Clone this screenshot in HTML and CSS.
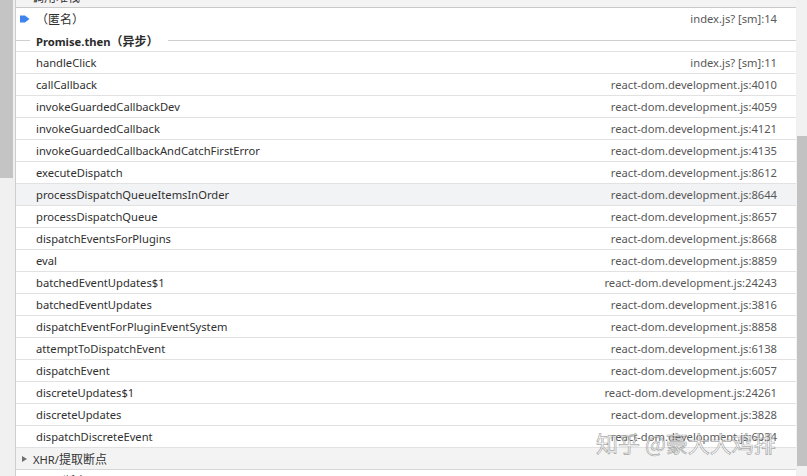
FILE: index.html
```html
<!DOCTYPE html>
<html lang="zh-CN">
<head>
<meta charset="utf-8">
<title>调用堆栈</title>
<link rel="stylesheet" href="styles.css">
</head>
<body>
<div class="app">
  <div class="lscroll"><div class="lthumb"></div></div>
  <div class="lgap"></div>
  <div class="main">
    <div class="list">
      <div class="section open"><span class="tri down"></span><span class="stitle cjk">调用堆栈</span></div>
      <div class="row current">
        <svg class="cur-icon" width="10" height="10" viewBox="0 0 10 10"><polygon points="0,1.5 5,1.5 9.5,5 5,8.5 0,8.5" fill="#3f84ee"/></svg>
        <span class="fn cjk">（匿名）</span><span class="loc">index.js? [sm]:14</span>
      </div>
      <div class="row sep"><span class="line lead"></span><span class="async">Promise.then<span class="cjk">（异步）</span></span><span class="line tail"></span></div>
      <div class="row"><span class="fn">handleClick</span><span class="loc">index.js? [sm]:11</span></div>
      <div class="row"><span class="fn">callCallback</span><span class="loc">react-dom.development.js:4010</span></div>
      <div class="row"><span class="fn">invokeGuardedCallbackDev</span><span class="loc">react-dom.development.js:4059</span></div>
      <div class="row"><span class="fn">invokeGuardedCallback</span><span class="loc">react-dom.development.js:4121</span></div>
      <div class="row"><span class="fn">invokeGuardedCallbackAndCatchFirstError</span><span class="loc">react-dom.development.js:4135</span></div>
      <div class="row"><span class="fn">executeDispatch</span><span class="loc">react-dom.development.js:8612</span></div>
      <div class="row hover"><span class="fn">processDispatchQueueItemsInOrder</span><span class="loc">react-dom.development.js:8644</span></div>
      <div class="row"><span class="fn">processDispatchQueue</span><span class="loc">react-dom.development.js:8657</span></div>
      <div class="row"><span class="fn">dispatchEventsForPlugins</span><span class="loc">react-dom.development.js:8668</span></div>
      <div class="row"><span class="fn">eval</span><span class="loc">react-dom.development.js:8859</span></div>
      <div class="row"><span class="fn">batchedEventUpdates$1</span><span class="loc">react-dom.development.js:24243</span></div>
      <div class="row"><span class="fn">batchedEventUpdates</span><span class="loc">react-dom.development.js:3816</span></div>
      <div class="row"><span class="fn">dispatchEventForPluginEventSystem</span><span class="loc">react-dom.development.js:8858</span></div>
      <div class="row"><span class="fn">attemptToDispatchEvent</span><span class="loc">react-dom.development.js:6138</span></div>
      <div class="row"><span class="fn">dispatchEvent</span><span class="loc">react-dom.development.js:6057</span></div>
      <div class="row"><span class="fn">discreteUpdates$1</span><span class="loc">react-dom.development.js:24261</span></div>
      <div class="row"><span class="fn">discreteUpdates</span><span class="loc">react-dom.development.js:3828</span></div>
      <div class="row"><span class="fn">dispatchDiscreteEvent</span><span class="loc">react-dom.development.js:6034</span></div>
      <div class="section closed"><span class="tri right"></span><span class="stitle">XHR/<span class="cjk">提取断点</span></span></div>
      <div class="section next"><span class="tri right"></span><span class="stitle">DOM <span class="cjk">断点</span></span></div>
    </div>
    <div class="watermark">知乎 @豪大大鸡排</div>
  </div>
  <div class="rscroll"><div class="rthumb"></div></div>
</div>
</body>
</html>
```
FILE: styles.css
```css
html, body {
  margin: 0;
  padding: 0;
  background: #ffffff;
}
body {
  width: 807px;
  height: 476px;
  overflow: hidden;
  font-family: "Noto Sans", "Noto Sans CJK SC", sans-serif;
  font-size: 11.2px;
  color: #333333;
}
.cjk {
  font-family: "Noto Sans CJK SC", sans-serif;
  font-size: 12px;
}
.app {
  display: flex;
  height: 476px;
}
.lscroll {
  width: 13px;
  background: #f0f0f0;
  flex: none;
}
.lthumb {
  height: 178px;
  background: #c4c4c4;
}
.lgap {
  width: 2px;
  background: #f0f0f0;
  border-right: 1px solid #cdcdcd;
  flex: none;
}
.main {
  flex: 1;
  position: relative;
  overflow: hidden;
}
.list {
  margin-top: -14px;
}
.row {
  height: 22px;
  box-sizing: border-box;
  border-bottom: 1px solid #e2e2e2;
  display: flex;
  align-items: center;
  justify-content: space-between;
  padding: 0 19px 1px 20px;
  white-space: nowrap;
}
.row.hover {
  background: #f2f3f5;
}
.row.current {
  border-bottom: none;
  padding-left: 4px;
  justify-content: flex-start;
}
.cur-icon {
  flex: none;
  margin-right: 6px;
}
.row.current .loc {
  margin-left: auto;
}
.fn {
  color: #303030;
}
.loc {
  color: #585858;
}
.row.sep {
  padding: 0;
  justify-content: flex-start;
}
.line {
  height: 1px;
  background: #cfcfcf;
}
.line.lead {
  width: 14px;
  margin-right: 6px;
  flex: none;
}
.line.tail {
  flex: 1;
  margin-left: 9px;
}
.async {
  font-weight: bold;
  color: #2b2b2b;
}
.section {
  height: 22px;
  box-sizing: border-box;
  display: flex;
  align-items: center;
  padding-left: 6px;
  background: #f3f3f3;
  border-bottom: 1px solid #d6d6d6;
  white-space: nowrap;
}
.section.open {
  border-bottom: 1px solid #c9c9c9;
}
.section.next {
  background: #ffffff;
}
.tri {
  width: 0;
  height: 0;
  flex: none;
  margin-right: 6px;
}
.tri.right {
  border-left: 5px solid #707070;
  border-top: 3.5px solid transparent;
  border-bottom: 3.5px solid transparent;
}
.tri.down {
  border-top: 5px solid #707070;
  border-left: 3.5px solid transparent;
  border-right: 3.5px solid transparent;
  margin-right: 4px;
}
.stitle {
  color: #333333;
}
.rscroll {
  width: 11px;
  flex: none;
  background: #f1f1f1;
}
.rthumb {
  margin-top: 136px;
  margin-left: 1px;
  height: 330px;
  background: #c2c2c2;
}
.watermark {
  position: absolute;
  left: 580px;
  top: 426px;
  font-family: "Noto Sans CJK SC", sans-serif;
  font-size: 22px;
  color: rgba(255, 255, 255, 0.6);
  -webkit-text-stroke: 0.7px rgba(110, 110, 110, 0.6);
  white-space: nowrap;
}
```
